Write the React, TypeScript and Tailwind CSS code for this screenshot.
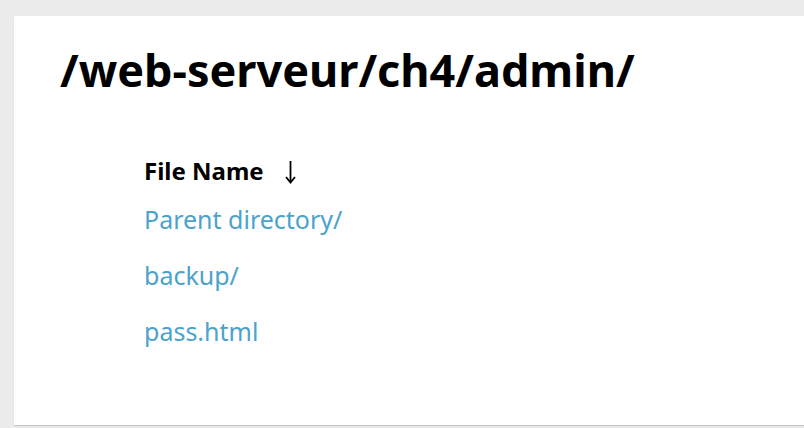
export default function App() {
  const files = ['Parent directory/', 'backup/', 'pass.html'];
  return (
    <div className="h-[428px] w-full bg-[#ececec] pt-4 pl-[14px] overflow-hidden">
      <div className="h-[409px] bg-white shadow-[0_1px_1px_rgba(0,0,0,0.15)] pl-[46px] pt-6 font-['Noto_Sans',sans-serif]">
        <h1 className="text-[45px] leading-[60px] font-bold text-black">
          /web-serveur/ch4/admin/
        </h1>
        <table className="ml-[84px] mt-[55px]">
          <thead>
            <tr>
              <th className="text-left text-[24px] leading-8 font-bold text-black pb-1 flex items-center">
                File Name
                {/* sort arrow */}
                <svg width="11" height="24" viewBox="0 0 11 24" className="ml-[21px] mt-[2px]" fill="none" stroke="black" strokeWidth="1.8">
                  <path d="M5.5 1 V22" />
                  <path d="M1 17 L5.5 22.5 L10 17" />
                </svg>
              </th>
            </tr>
          </thead>
          <tbody>
            {files.map((f) => (
              <tr key={f}>
                <td className="h-[56px] text-[25px] leading-[56px] text-[#4ba3cb]">
                  <a href="#">{f}</a>
                </td>
              </tr>
            ))}
          </tbody>
        </table>
      </div>
    </div>
  );
}
